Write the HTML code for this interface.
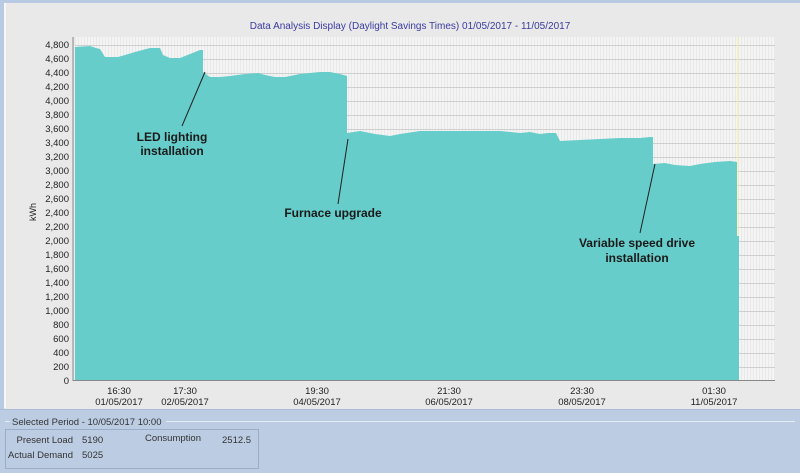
<!DOCTYPE html>
<html><head><style>
html,body{margin:0;padding:0;width:800px;height:473px;overflow:hidden;background:#e9e9e9;font-family:"Liberation Sans",sans-serif;}
</style></head><body>
<svg width="800" height="473" viewBox="0 0 800 473" xmlns="http://www.w3.org/2000/svg" style="position:absolute;left:0;top:0">
<defs>
<pattern id="vg" width="3" height="10" patternUnits="userSpaceOnUse"><rect width="3" height="10" fill="#f4f4f4"/><rect width="1" height="10" fill="#e9e9e9"/></pattern>
</defs>
<rect x="0" y="0" width="800" height="473" fill="#e9e9e9"/>
<rect x="0" y="0" width="800" height="3" fill="#b9cbe2"/>
<rect x="0" y="0" width="4" height="473" fill="#b9cbe2"/>
<rect x="4" y="3" width="2" height="405" fill="#f7f7f7"/>
<text x="410" y="29" font-size="10" fill="#3a3aa0" text-anchor="middle">Data Analysis Display (Daylight Savings Times) 01/05/2017 - 11/05/2017</text>
<rect x="75" y="37" width="700" height="343" fill="url(#vg)"/>
<g stroke="#cfcfcf" stroke-width="1">
<line x1="75" x2="775" y1="45.5" y2="45.5"/><line x1="75" x2="775" y1="59.5" y2="59.5"/><line x1="75" x2="775" y1="73.5" y2="73.5"/><line x1="75" x2="775" y1="87.5" y2="87.5"/><line x1="75" x2="775" y1="101.5" y2="101.5"/><line x1="75" x2="775" y1="115.5" y2="115.5"/><line x1="75" x2="775" y1="129.5" y2="129.5"/><line x1="75" x2="775" y1="143.5" y2="143.5"/><line x1="75" x2="775" y1="157.5" y2="157.5"/><line x1="75" x2="775" y1="171.5" y2="171.5"/><line x1="75" x2="775" y1="185.5" y2="185.5"/><line x1="75" x2="775" y1="199.5" y2="199.5"/><line x1="75" x2="775" y1="213.5" y2="213.5"/><line x1="75" x2="775" y1="227.5" y2="227.5"/><line x1="75" x2="775" y1="241.5" y2="241.5"/><line x1="75" x2="775" y1="255.5" y2="255.5"/><line x1="75" x2="775" y1="269.5" y2="269.5"/><line x1="75" x2="775" y1="283.5" y2="283.5"/><line x1="75" x2="775" y1="297.5" y2="297.5"/><line x1="75" x2="775" y1="311.5" y2="311.5"/><line x1="75" x2="775" y1="325.5" y2="325.5"/><line x1="75" x2="775" y1="339.5" y2="339.5"/><line x1="75" x2="775" y1="353.5" y2="353.5"/><line x1="75" x2="775" y1="367.5" y2="367.5"/>
</g>
<line x1="738" x2="738" y1="37" y2="380" stroke="#f3f0a0" stroke-width="1"/>
<polygon fill="#66cdca" points="75,380 75,47 90,46 96,48 100,49 105,57 118,57 125,55 135,52 150,48 160,48 163,55 170,58 180,58 190,54 200,50 203,50 203,72 210,77 220,77 230,76 245,74 258,73 265,75 275,77 285,77 300,74 320,72 330,72 340,74 347,76 347,133 360,131 375,134 390,136 400,134 420,131 440,131 460,131 480,131 500,131 520,133 530,132 540,134 548,133 556,133 560,141 580,140 600,139 620,138 640,138 650,137 653,137 653,164 665,163 675,165 690,166 700,164 715,162 730,161 737,162 737,236 739,236 739,380"/>
<line x1="73" x2="73" y1="37" y2="381" stroke="#888" stroke-width="1"/>
<line x1="73" x2="775" y1="380.5" y2="380.5" stroke="#888" stroke-width="1"/>
<g font-size="9.5" fill="#222" text-anchor="end">
<text x="69" y="48">4,800</text><text x="69" y="62">4,600</text><text x="69" y="76">4,400</text><text x="69" y="90">4,200</text><text x="69" y="104">4,000</text><text x="69" y="118">3,800</text><text x="69" y="132">3,600</text><text x="69" y="146">3,400</text><text x="69" y="160">3,200</text><text x="69" y="174">3,000</text><text x="69" y="188">2,800</text><text x="69" y="202">2,600</text><text x="69" y="216">2,400</text><text x="69" y="230">2,200</text><text x="69" y="244">2,000</text><text x="69" y="258">1,800</text><text x="69" y="272">1,600</text><text x="69" y="286">1,400</text><text x="69" y="300">1,200</text><text x="69" y="314">1,000</text><text x="69" y="328">800</text><text x="69" y="342">600</text><text x="69" y="356">400</text><text x="69" y="370">200</text><text x="69" y="384">0</text>
</g>
<text x="36" y="212" font-size="9" fill="#222" transform="rotate(-90 36 212)" text-anchor="middle">kWh</text>
<g font-size="9.5" fill="#222" text-anchor="middle">
<text x="119" y="394">16:30</text><text x="119" y="405">01/05/2017</text>
<text x="185" y="394">17:30</text><text x="185" y="405">02/05/2017</text>
<text x="317" y="394">19:30</text><text x="317" y="405">04/05/2017</text>
<text x="449" y="394">21:30</text><text x="449" y="405">06/05/2017</text>
<text x="582" y="394">23:30</text><text x="582" y="405">08/05/2017</text>
<text x="714" y="394">01:30</text><text x="714" y="405">11/05/2017</text>
</g>
<g stroke="#222" stroke-width="1">
<line x1="205" y1="72" x2="182" y2="126"/>
<line x1="348" y1="139" x2="338" y2="204"/>
<line x1="655" y1="164" x2="640" y2="233"/>
</g>
<g font-size="12" font-weight="bold" fill="#1a1a1a" text-anchor="middle">
<text x="172" y="141">LED lighting</text><text x="172" y="155">installation</text>
<text x="333" y="217">Furnace upgrade</text>
<text x="637" y="247">Variable speed drive</text><text x="637" y="262">installation</text>
</g>
<rect x="0" y="410" width="800" height="63" fill="#bccde3"/>
<line x1="0" y1="409.5" x2="800" y2="409.5" stroke="#a9bcd6"/>
<line x1="5" y1="421.5" x2="795" y2="421.5" stroke="#e4ecf6"/>
<rect x="10" y="416" width="156" height="10" fill="#bccde3"/>
<text x="12" y="425" font-size="9.5" fill="#333">Selected Period - 10/05/2017 10:00</text>
<rect x="5.5" y="429.5" width="253" height="39" fill="none" stroke="#9aaec8"/>
<g font-size="9.5" fill="#333">
<text x="73" y="443" text-anchor="end">Present Load</text><text x="82" y="443">5190</text>
<text x="73" y="458" text-anchor="end">Actual Demand</text><text x="82" y="458">5025</text>
<text x="145" y="441">Consumption</text><text x="222" y="443">2512.5</text>
</g>
</svg>
</body></html>
